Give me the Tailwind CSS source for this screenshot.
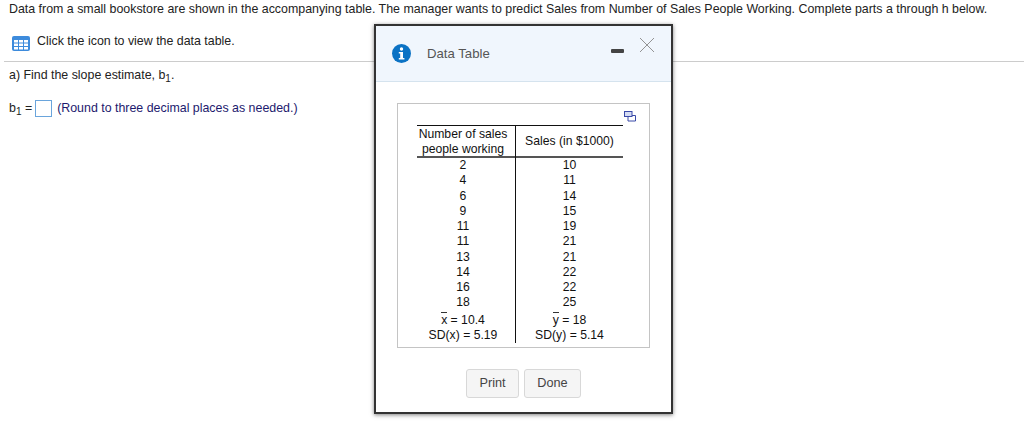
<!DOCTYPE html>
<html lang="en">
<head>
<meta charset="UTF-8">
<title>Data Table</title>
<script src="https://cdn.jsdelivr.net/npm/@tailwindcss/browser@4"></script>
</head>
<body class="bg-white text-[#222] font-['Liberation_Sans',Arial,sans-serif] text-[12.4px] overflow-hidden">
<div class="relative w-[1024px] h-[436px]">
  <!-- question -->
  <div class="pl-[9px] pt-[2px] h-[16px] leading-[15px] whitespace-nowrap">Data from a small bookstore are shown in the accompanying table. The manager wants to predict Sales from Number of Sales People Working. Complete parts a through h below.</div>
  <div class="flex items-center gap-[7px] pl-[8px] pt-[9px] h-[46px] border-b border-[#ccc] ml-[4px]">
    <svg class="w-[18px] h-[15px]" viewBox="0 0 18 15">
      <rect x="0" y="0" width="18" height="15" rx="2" fill="#3d8bdc"/>
      <g fill="#fff">
        <rect x="2" y="4" width="4" height="2.5"/><rect x="7" y="4" width="4" height="2.5"/><rect x="12" y="4" width="4" height="2.5"/>
        <rect x="2" y="7.5" width="4" height="2.5"/><rect x="7" y="7.5" width="4" height="2.5"/><rect x="12" y="7.5" width="4" height="2.5"/>
        <rect x="2" y="11" width="4" height="2.5"/><rect x="7" y="11" width="4" height="2.5"/><rect x="12" y="11" width="4" height="2.5"/>
      </g>
    </svg>
    <span class="-mt-[4px]">Click the icon to view the data table.</span>
  </div>
  <div class="pl-[9px] pt-[5px] h-[28px] leading-[16px]">a) Find the slope estimate, b<sub class="text-[10px]">1</sub>.</div>
  <div class="flex items-center pl-[9px] pt-[13px] h-[24px]">
    <span>b<sub class="text-[10px]">1</sub> =</span>
    <span class="inline-block w-[17px] h-[17px] border border-[#6aa5dc] ml-[3px] mr-[5px]"></span>
    <span class="text-[#1d1a6e]">(Round to three decimal places as needed.)</span>
  </div>

  <!-- dialog -->
  <div class="absolute left-[374px] top-[24px] w-[299px] h-[390px] bg-white border-2 border-[#333] shadow-[0_1px_4px_rgba(0,0,0,0.5)] flex flex-col">
    <div class="relative h-[56px] shrink-0 bg-[#f0f6fd] border-b border-[#d5e3ee] flex items-center pl-[16px]">
      <svg class="w-[19px] h-[19px]" viewBox="0 0 19 19">
        <circle cx="9.5" cy="9.5" r="9.5" fill="#0b72c4"/>
        <circle cx="9.5" cy="5" r="1.7" fill="#fff"/>
        <path d="M6.8 8h4.2v6h1.4v1.4H6.8V14h1.4V9.4H6.8z" fill="#fff"/>
      </svg>
      <span class="ml-[16px] mt-[1px] text-[#555] text-[13.2px]">Data Table</span>
      <span class="absolute left-[235px] top-[23px] w-[13px] h-[4px] bg-[#444] rounded-[1px]"></span>
      <svg class="absolute left-[263px] top-[11px] w-[16px] h-[16px]" viewBox="0 0 16 16" fill="none" stroke="#888" stroke-width="0.9"><path d="M1 1l14 14M15 1L1 15"/></svg>
    </div>
    <div class="relative ml-[21px] mt-[21px] w-[253px] h-[245px] border border-[#c4c4c4] pt-[21px] pl-[19px]">
      <svg class="absolute left-[226px] top-[7px] w-[12px] h-[11px]" viewBox="0 0 12 11" fill="none" stroke="#3a4aa8" stroke-width="1"><rect x="0.5" y="0.5" width="7.5" height="5" fill="#d5dcf3"/><path d="M4 6v4h7.5V4.500H8"/></svg>
      <div class="w-[206px] leading-[15.25px] text-[12.2px] text-[#111] text-center border-t border-[#111]">
        <div class="grid grid-cols-[99px_107px] border-b-2 border-[#555] h-[32px]">
          <div class="border-r border-[#111] pt-[1px] pr-[6px] whitespace-nowrap">Number of sales<br>people working</div>
          <div class="flex items-center justify-center">Sales (in $1000)</div>
        </div>
        <div class="grid grid-cols-[99px_107px]">
          <div class="border-r border-[#111] pr-[6px]">
            <div>2</div><div>4</div><div>6</div><div>9</div><div>11</div><div>11</div><div>13</div><div>14</div><div>16</div><div>18</div>
            <div class="pt-[2px]"><span class="relative"><span class="absolute left-0 top-[-1px] w-[6px] border-t border-[#333]"></span>x</span> = 10.4</div>
            <div>SD(x) = 5.19</div>
          </div>
          <div>
            <div>10</div><div>11</div><div>14</div><div>15</div><div>19</div><div>21</div><div>21</div><div>22</div><div>22</div><div>25</div>
            <div class="pt-[2px]"><span class="relative"><span class="absolute left-0 top-[-1px] w-[6px] border-t border-[#333]"></span>y</span> = 18</div>
            <div>SD(y) = 5.14</div>
          </div>
        </div>
      </div>
    </div>
    <div class="flex gap-[5px] mt-[21px] ml-[90px]">
      <button class="w-[53px] h-[29px] pt-[1px] bg-[#f5f5f5] border border-[#d8d8d8] rounded-[3px] text-[#444] text-[12.7px]">Print</button>
      <button class="w-[57px] h-[29px] pt-[1px] bg-[#f5f5f5] border border-[#d8d8d8] rounded-[3px] text-[#444] text-[12.7px]">Done</button>
    </div>
  </div>
</div>
</body>
</html>
